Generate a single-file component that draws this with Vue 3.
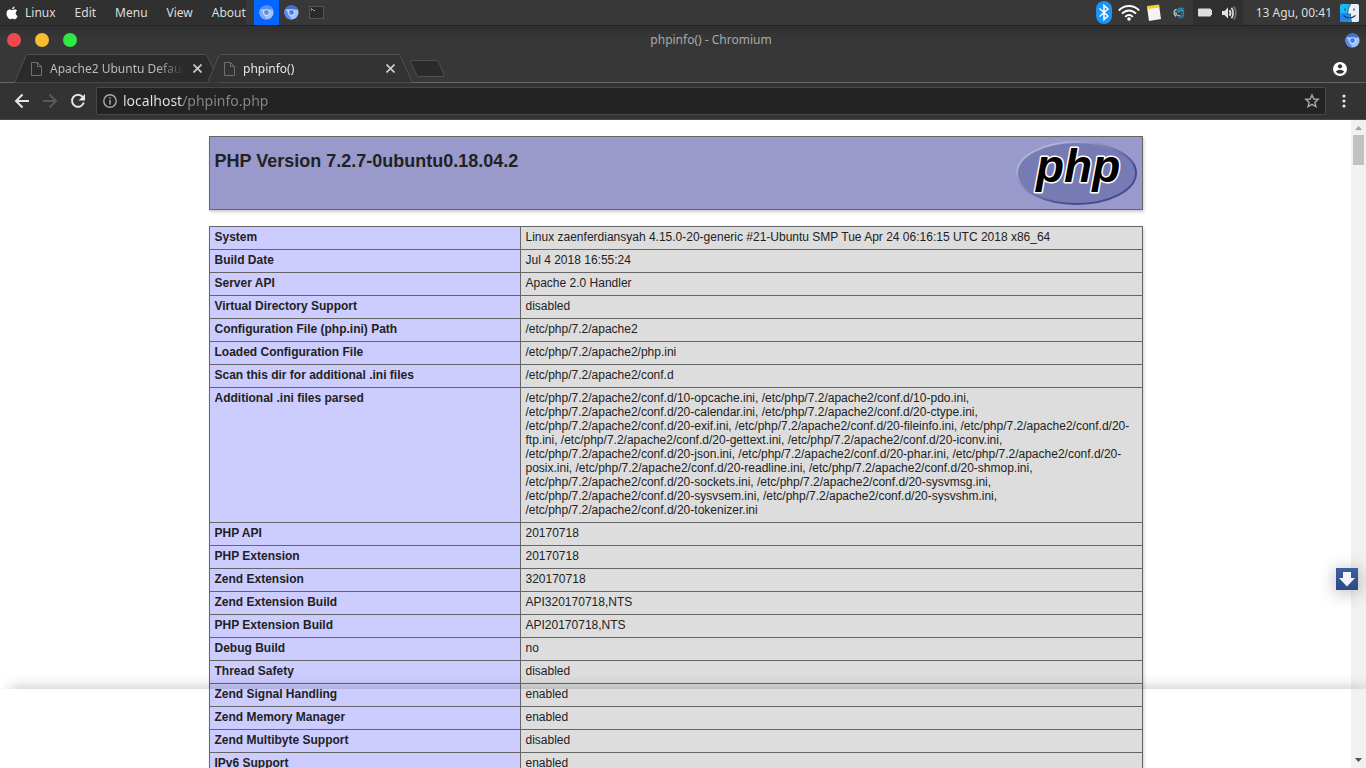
<template>
  <div class="desktop">
    <header class="panel">
      <nav class="panel-menu" aria-label="Applications">
        <svg class="apple" width="12" height="14" viewBox="0 0 12 14">
          <path d="M8.6 0.5C8.7 1.9 7.500 3.300 6.100 3.300C6 2 7.200 0.700 8.600 0.500Z" fill="#fff" />
          <path d="M6.200 4.200C6.800 4.200 7.700 3.500 8.800 3.500C9.700 3.500 10.700 4 11.200 4.800C9 6 9.400 9 11.600 9.900C11.100 11.300 10 13.200 8.800 13.200C7.900 13.200 7.500 12.700 6.400 12.700C5.300 12.700 4.900 13.200 4.100 13.200C2.400 13.200 0.500 10 0.500 7.600C0.500 5 2 3.600 3.700 3.600C4.800 3.600 5.600 4.200 6.200 4.200Z" fill="#fff" />
        </svg>
        <button v-for="item in menuItems" :key="item" class="panel-item">{{ item }}</button>
      </nav>
      <div class="tasks">
        <button class="task active" aria-label="Chromium window">
          <svg width="15" height="15" viewBox="0 0 16 16">
            <circle cx="8" cy="8" r="7.500" fill="#a3c2f8" />
            <path d="M1.500 4.200A7.500 7.500 0 0 1 14.800 4.800H8Z" fill="#5c8de8" />
            <path d="M1.500 4.200L5 10L8 15.500A7.500 7.500 0 0 1 1.500 4.200Z" fill="#7fa8f2" />
            <circle cx="8" cy="8" r="3.500" fill="#d5e3fc" />
            <circle cx="8" cy="8" r="2.600" fill="#5c8de8" />
          </svg>
        </button>
        <button class="task" aria-label="Chromium launcher">
          <svg width="15" height="15" viewBox="0 0 16 16">
            <circle cx="8" cy="8" r="7.500" fill="#a3c2f8" />
            <path d="M1.500 4.200A7.500 7.500 0 0 1 14.800 4.800H8Z" fill="#3f70d0" />
            <path d="M1.500 4.200L5 10L8 15.500A7.500 7.500 0 0 1 1.500 4.200Z" fill="#5b8def" />
            <circle cx="8" cy="8" r="3.500" fill="#d5e3fc" />
            <circle cx="8" cy="8" r="2.600" fill="#4a7ddd" />
          </svg>
        </button>
        <button class="task" aria-label="Terminal">
          <svg width="15" height="13" viewBox="0 0 15 13">
            <rect x="0.500" y="0.500" width="14" height="12" fill="#2b2b2b" stroke="#555" />
            <path d="M2 2.500L3.500 3.500L2 4.500M4.500 4.500H6" fill="none" stroke="#ccc" stroke-width="0.900" />
          </svg>
        </button>
      </div>
      <div class="tray">
        <svg width="16" height="23" viewBox="0 0 16 23">
          <rect width="16" height="23" rx="8" fill="#1a94f6" />
          <path d="M3.500 7.500L12 15L8 18.500V4.500L12 8L3.500 15.500" fill="none" stroke="#fff" stroke-width="1.500" />
        </svg>
        <svg width="22" height="16" viewBox="0 0 22 16">
          <g fill="none" stroke="#fff" stroke-width="1.900">
            <path d="M0.800 5.500C6.500 -0.500 15.500 -0.500 21.200 5.500" />
            <path d="M4 8.700C8 4.400 14 4.400 18 8.700" />
            <path d="M7.200 11.800C9.500 9.500 12.500 9.500 14.800 11.800" />
          </g>
          <circle cx="11" cy="14" r="1.800" fill="#fff" />
        </svg>
        <svg width="16" height="18" viewBox="0 0 16 18">
          <path d="M1 3L13 1L15 15L3 17Z" fill="#f4f4f4" />
          <path d="M1 2L13 0.500L13.500 3.500L1.500 5Z" fill="#fcc927" />
        </svg>
        <svg class="swirl" width="12" height="12" viewBox="0 0 14 14">
          <g fill="none" stroke-width="1.700">
            <path d="M12.500 2C9 0.500 5 1.500 4.500 5.500" stroke="#2d87ad" />
            <path d="M12.500 5C10 2.500 6.500 3.500 6.500 7" stroke="#3da2c9" />
            <path d="M10 4.500C13.500 6 13 11 9 13" stroke="#2d87ad" />
            <path d="M9 6.500C11 8 10 11 6.500 12.500" stroke="#236d90" />
            <path d="M4 2.500C0.500 4 0.500 8.500 3.500 11" stroke="#b9c4c8" />
            <path d="M3.500 6C3 9 5 10.500 8.500 10" stroke="#9fb0b6" />
          </g>
        </svg>
        <div class="indicators">
          <svg width="15" height="9" viewBox="0 0 15 9">
            <path d="M1 0.500H12Q13 0.500 13 1.500V2H14V7H13V7.500Q13 8.500 12 8.500H1Q0 8.500 0 7.500V1.500Q0 0.500 1 0.500Z" fill="#ddd" />
          </svg>
          <svg width="16" height="14" viewBox="0 0 16 14">
            <path d="M0 5H2.500L6 1.500V12.500L2.500 9H0Z" fill="#e4e4e4" />
            <path d="M7.500 4.200Q9.500 7 7.500 9.800" fill="none" stroke="#e4e4e4" stroke-width="1.900" />
            <path d="M9.500 1.700Q12.800 7 9.500 12.300" fill="none" stroke="#ddd" stroke-width="1.700" />
            <path d="M12 0.500Q16 7 12 13.500" fill="none" stroke="#777" stroke-width="1.500" />
          </svg>
        </div>
        <time class="clock">13 Agu, 00:41</time>
        <svg width="19" height="18" viewBox="0 0 19 18">
          <rect width="19" height="18" rx="2" fill="#1fb5f8" />
          <path d="M0 9H9.500V18H2Q0 18 0 16Z" fill="#2586ea" />
          <path d="M10.500 0H17Q19 0 19 2V16Q19 18 17 18H11.500Q10.500 14 10.500 10H7.500Q8 4 10.500 0Z" fill="#e8eff6" />
          <path d="M5 4.500V6.500M14 4.500V6.500M3.500 11.500Q9.500 16.500 15.500 11.500" fill="none" stroke="#173a5e" stroke-width="1.200" />
          <path d="M10.500 0Q8 4 7.500 10H10.500Q10.500 14 11.500 18" fill="none" stroke="#173a5e" stroke-width="0.700" />
        </svg>
      </div>
    </header>

    <div class="titlebar">
      <div class="lights">
        <button class="light red" aria-label="Close"></button>
        <button class="light yellow" aria-label="Minimize"></button>
        <button class="light green" aria-label="Maximize"></button>
      </div>
      <div class="window-title">phpinfo() - Chromium</div>
      <svg width="15" height="15" viewBox="0 0 16 16">
        <circle cx="8" cy="8" r="7.500" fill="#a3c2f8" />
        <path d="M1.500 4.200A7.500 7.500 0 0 1 14.800 4.800H8Z" fill="#3f70d0" />
        <path d="M1.500 4.200L5 10L8 15.500A7.500 7.500 0 0 1 1.500 4.200Z" fill="#5b8def" />
        <circle cx="8" cy="8" r="3.500" fill="#d5e3fc" />
        <circle cx="8" cy="8" r="2.600" fill="#4a7ddd" />
      </svg>
    </div>

    <div class="tabstrip">
      <div v-for="tab in tabs" :key="tab.title" class="tab" :class="{ active: tab.active }">
        <svg class="tab-shape" width="206" height="29" viewBox="0 0 206 29">
          <path d="M0.500 28.500L12 1.500Q12.500 0.500 14 0.500H191Q192.500 0.500 193 1.500L205.500 28.500" />
        </svg>
        <svg class="page-icon" width="11" height="14" viewBox="0 0 11 14">
          <path d="M0.500 0.500H6.500L10.500 4.500V13.500H0.500ZM6.500 0.500V4.500H10.500" fill="none" stroke="#707070" />
        </svg>
        <span class="tab-title">{{ tab.title }}</span>
        <button class="tab-close" :aria-label="'Close ' + tab.title">
          <svg width="9" height="9" viewBox="0 0 9 9">
            <path d="M0.500 0.500L8.500 8.500M8.500 0.500L0.500 8.500" stroke="#ccc" stroke-width="1.700" />
          </svg>
        </button>
      </div>
      <button class="new-tab" aria-label="New tab">
        <svg width="35" height="17" viewBox="0 0 35 17">
          <path d="M1.500 0.500H27Q28 0.500 28.500 1.500L34 15Q34.500 16.500 33 16.500H9Q7.500 16.500 7 15.500L0.500 2Q0.500 0.500 1.500 0.500Z" fill="#2b2b2b" stroke="#505050" />
        </svg>
      </button>
      <button class="profile" aria-label="Profile">
        <svg width="14" height="14" viewBox="0 0 14 14">
          <circle cx="7" cy="7" r="7" fill="#fff" />
          <circle cx="7" cy="4.300" r="2.100" fill="#333" />
          <path d="M2.800 9.500Q4.500 7.800 7 7.800T11.200 9.500Q9.800 11.800 7 11.800T2.800 9.500Z" fill="#333" />
        </svg>
      </button>
    </div>

    <div class="toolbar">
      <button class="tool" aria-label="Back">
        <svg width="16" height="16" viewBox="0 0 16 16">
          <path d="M15 8H2M8.500 1.500L2 8L8.500 14.500" fill="none" stroke="#e6e6e6" stroke-width="2" />
        </svg>
      </button>
      <button class="tool" aria-label="Forward" disabled>
        <svg width="16" height="16" viewBox="0 0 16 16">
          <path d="M1 8H14M7.500 1.500L14 8L7.500 14.500" fill="none" stroke="#5a5a5a" stroke-width="2" />
        </svg>
      </button>
      <button class="tool" aria-label="Reload">
        <svg width="16" height="16" viewBox="0 0 16 16">
          <path d="M12.700 4A6 6 0 1 0 13.800 9.500" fill="none" stroke="#e6e6e6" stroke-width="2" />
          <path d="M15 1V7.500H8.500Z" fill="#e6e6e6" />
        </svg>
      </button>
      <div class="omnibox">
        <svg width="14" height="14" viewBox="0 0 14 14">
          <circle cx="7" cy="7" r="6.200" fill="none" stroke="#aaa" stroke-width="1.400" />
          <path d="M7 6V10.500M7 3.300V4.800" stroke="#aaa" stroke-width="1.500" />
        </svg>
        <input v-model="url" class="url" type="text" aria-label="Address" spellcheck="false" />
        <button class="star" aria-label="Bookmark">
          <svg width="16" height="16" viewBox="0 0 16 16">
            <path d="M8 2L9.800 6L14.200 6.400L10.900 9.300L11.900 13.600L8 11.300L4.100 13.600L5.100 9.300L1.800 6.400L6.200 6Z" fill="none" stroke="#aaa" stroke-width="1.400" />
          </svg>
        </button>
      </div>
      <button class="more" aria-label="Menu">
        <svg width="4" height="14" viewBox="0 0 4 14">
          <circle cx="2" cy="2" r="1.600" fill="#e6e6e6" />
          <circle cx="2" cy="7" r="1.600" fill="#e6e6e6" />
          <circle cx="2" cy="12" r="1.600" fill="#e6e6e6" />
        </svg>
      </button>
    </div>

    <div class="viewport">
      <main class="page">
        <div class="banner">
          <h1>PHP Version 7.2.7-0ubuntu0.18.04.2</h1>
          <svg width="121" height="64" viewBox="0 0 121 64" role="img" aria-label="PHP logo">
            <defs>
              <linearGradient id="rim" x1="0" y1="0" x2="1" y2="1">
                <stop offset="0.200" stop-color="#aeb2d5" />
                <stop offset="0.450" stop-color="#777bb3" />
                <stop offset="0.700" stop-color="#484893" />
              </linearGradient>
            </defs>
            <ellipse cx="60.500" cy="32" rx="59.500" ry="31" fill="#777bb3" stroke="url(#rim)" stroke-width="2" />
            <text x="20" y="41" class="php-word">php</text>
          </svg>
        </div>
        <table class="info">
          <tbody>
            <tr v-for="row in rows" :key="row[0]">
              <th scope="row">{{ row[0] }}</th>
              <td>{{ row[1] }}</td>
            </tr>
          </tbody>
        </table>
      </main>
      <div class="scrollbar">
        <svg class="arrow" width="15" height="15" viewBox="0 0 15 15">
          <path d="M4 10L7.500 6L11 10Z" fill="#a3a3a3" />
        </svg>
        <div class="thumb"></div>
        <svg class="arrow down" width="15" height="15" viewBox="0 0 15 15">
          <path d="M4 5L7.500 9L11 5Z" fill="#505050" />
        </svg>
      </div>
    </div>

    <div class="dock-shadow"></div>
    <button class="download" aria-label="Download">
      <svg width="22" height="22" viewBox="0 0 22 22">
        <path d="M7 4H15V10H19L11 18.500L3 10H7Z" fill="#f2f4f8" />
      </svg>
    </button>
  </div>
</template>

<script setup>
import { ref } from 'vue'

const url = ref('localhost/phpinfo.php')

const menuItems = ['Linux', 'Edit', 'Menu', 'View', 'About']

const tabs = [
  { title: 'Apache2 Ubuntu Default', active: false },
  { title: 'phpinfo()', active: true }
]

const confDir = '/etc/php/7.2/apache2/conf.d'

const iniFiles = [
  '10-opcache', '10-pdo', '20-calendar', '20-ctype', '20-exif', '20-fileinfo',
  '20-ftp', '20-gettext', '20-iconv', '20-json', '20-phar', '20-posix',
  '20-readline', '20-shmop', '20-sockets', '20-sysvmsg', '20-sysvsem',
  '20-sysvshm', '20-tokenizer'
]

const rows = [
  ['System', 'Linux zaenferdiansyah 4.15.0-20-generic #21-Ubuntu SMP Tue Apr 24 06:16:15 UTC 2018 x86_64'],
  ['Build Date', 'Jul 4 2018 16:55:24'],
  ['Server API', 'Apache 2.0 Handler'],
  ['Virtual Directory Support', 'disabled'],
  ['Configuration File (php.ini) Path', '/etc/php/7.2/apache2'],
  ['Loaded Configuration File', '/etc/php/7.2/apache2/php.ini'],
  ['Scan this dir for additional .ini files', confDir],
  ['Additional .ini files parsed', iniFiles.map((name) => `${confDir}/${name}.ini`).join(', ')],
  ['PHP API', '20170718'],
  ['PHP Extension', '20170718'],
  ['Zend Extension', '320170718'],
  ['Zend Extension Build', 'API320170718,NTS'],
  ['PHP Extension Build', 'API20170718,NTS'],
  ['Debug Build', 'no'],
  ['Thread Safety', 'disabled'],
  ['Zend Signal Handling', 'enabled'],
  ['Zend Memory Manager', 'enabled'],
  ['Zend Multibyte Support', 'disabled'],
  ['IPv6 Support', 'enabled']
]
</script>

<style>
body {
  margin: 0;
  overflow: hidden;
}
</style>

<style scoped>
.desktop {
  display: flex;
  flex-direction: column;
  height: 100vh;
  overflow: hidden;
  background: #fff;
  font-family: "Noto Sans", sans-serif;
  font-size: 12px;
  color: #ddd;
}

button {
  display: flex;
  align-items: center;
  justify-content: center;
  padding: 0;
  border: none;
  background: none;
  color: inherit;
  font: inherit;
}

svg {
  display: block;
  flex: none;
}

/* top panel */
.panel {
  display: flex;
  flex: none;
  align-items: stretch;
  height: 25px;
  background: #383838;
  border-bottom: 1px solid #222;
}

.panel-menu {
  display: flex;
  align-items: center;
  padding-left: 6px;
  background: #303030;
}

.panel-item {
  height: 25px;
  padding: 0 10px 0 9px;
}

.apple + .panel-item {
  padding-left: 7px;
}

.panel-item:last-child {
  padding-right: 0;
}

.tasks {
  display: flex;
  margin-left: 8px;
}

.task {
  width: 25px;
}

.task.active {
  background: #0566ff;
}

.tray {
  display: flex;
  align-items: center;
  gap: 6px;
  margin-left: auto;
  padding-right: 7px;
}

.swirl {
  margin: 0 2px 0 5px;
}

.indicators {
  display: flex;
  align-items: center;
  gap: 9px;
  height: 25px;
  margin-right: 7px;
  padding: 0 5px;
  background: #2f2f2f;
}

.clock {
  margin-right: 2px;
  white-space: nowrap;
}

/* window frame */
.titlebar {
  display: flex;
  flex: none;
  align-items: center;
  height: 28px;
  padding: 0 6px 0 7px;
  background: linear-gradient(#2f2f2f, #373737 12px);
}

.lights {
  display: flex;
  gap: 14px;
}

.light {
  width: 14px;
  height: 14px;
  border-radius: 50%;
}

.light.red {
  background: #f0484f;
}

.light.yellow {
  background: #fabd2f;
}

.light.green {
  background: #2fe843;
}

.window-title {
  flex: 1;
  padding-bottom: 2px;
  text-align: center;
  color: #aaa;
}

.tabstrip {
  display: flex;
  flex: none;
  align-items: center;
  height: 29px;
  padding: 0 19px 0 14px;
  background: linear-gradient(#666, #666) bottom / 100% 1px no-repeat #373737;
}

.tab {
  position: relative;
  display: flex;
  align-items: center;
  box-sizing: border-box;
  width: 206px;
  height: 29px;
  margin-right: -13px;
  padding: 0 18px 0 17px;
}

.tab-shape {
  position: absolute;
  inset: 0;
  fill: #2b2b2b;
  stroke: #505050;
}

.tab.active .tab-shape {
  fill: #333;
}

.page-icon,
.tab-title,
.tab-close {
  position: relative;
}

.tab-title {
  flex: 1;
  margin: 0 9px 0 8px;
  overflow: hidden;
  white-space: nowrap;
  color: #bbb;
  mask-image: linear-gradient(90deg, #000 80%, transparent);
}

.tab.active .tab-title {
  color: #e6e6e6;
}

.new-tab {
  margin-left: 10px;
}

.profile {
  margin-left: auto;
}

.toolbar {
  display: flex;
  flex: none;
  align-items: center;
  height: 36px;
  padding: 0 20px 0 14px;
  background: #333;
  border-bottom: 1px solid #484848;
}

.tool {
  width: 16px;
  margin-right: 12px;
}

.omnibox {
  display: flex;
  flex: 1;
  align-items: center;
  box-sizing: border-box;
  height: 28px;
  margin: 0 16px 0 -2px;
  padding: 0 5px 0 6px;
  background: #232323;
  border: 1px solid #484848;
  border-radius: 2px;
}

.url {
  flex: 1;
  min-width: 0;
  margin-left: 6px;
  padding: 0 0 2px;
  border: none;
  outline: none;
  /* host part bright, path part dim */
  background: linear-gradient(90deg, #e6e6e6 60px, #888 60px);
  background-clip: text;
  color: transparent;
  font: 14px "Noto Sans", sans-serif;
}

.more {
  width: 4px;
}

/* document */
.viewport {
  display: flex;
  flex: 1;
  min-height: 0;
}

.page {
  flex: 1;
  padding-top: 16px;
  overflow: hidden;
  font-family: "Liberation Sans", sans-serif;
  color: #222;
}

.banner {
  display: flex;
  justify-content: space-between;
  box-sizing: border-box;
  width: 934px;
  margin: 0 auto 16px;
  padding: 4px 5px;
  background: #99c;
  border: 1px solid #666;
  box-shadow: 1px 2px 3px #ccc;
}

.banner h1 {
  margin: 10px 0;
  font-size: 18px;
  line-height: 20px;
}

.php-word {
  font: italic bold 46px "Liberation Sans", sans-serif;
  fill: #000;
  stroke: #fff;
  stroke-width: 3px;
  stroke-linejoin: round;
  paint-order: stroke;
}

.info {
  width: 934px;
  margin: 0 auto;
  border-collapse: collapse;
  box-shadow: 1px 2px 3px #ccc;
}

.info th,
.info td {
  padding: 3px 5px 5px;
  border: 1px solid #666;
  font-size: 12px;
  line-height: 14px;
  text-align: left;
  vertical-align: baseline;
}

.info th {
  width: 300px;
  background: #ccf;
}

.info td {
  background: #ddd;
  overflow-wrap: break-word;
}

.scrollbar {
  display: flex;
  flex-direction: column;
  width: 15px;
  background: #f1f1f1;
}

.thumb {
  height: 30px;
  margin: 0 2px;
  background: #c1c1c1;
}

.arrow.down {
  margin-top: auto;
}

/* shadow of the hidden dock and its floating button */
.dock-shadow {
  position: fixed;
  left: 0;
  right: 0;
  bottom: 79px;
  height: 14px;
  background: linear-gradient(transparent, rgba(0, 0, 0, 0.04) 50%, rgba(0, 0, 0, 0.13));
  mask-image: linear-gradient(90deg, transparent, #000 20px, #000 calc(100% - 20px), rgba(0, 0, 0, 0.5));
}

.download {
  position: fixed;
  right: 8px;
  bottom: 178px;
  width: 22px;
  height: 22px;
  background: linear-gradient(#3d5f9f, #2b4a86);
  box-shadow: 0 2px 18px rgba(0, 0, 0, 0.3);
}
</style>
